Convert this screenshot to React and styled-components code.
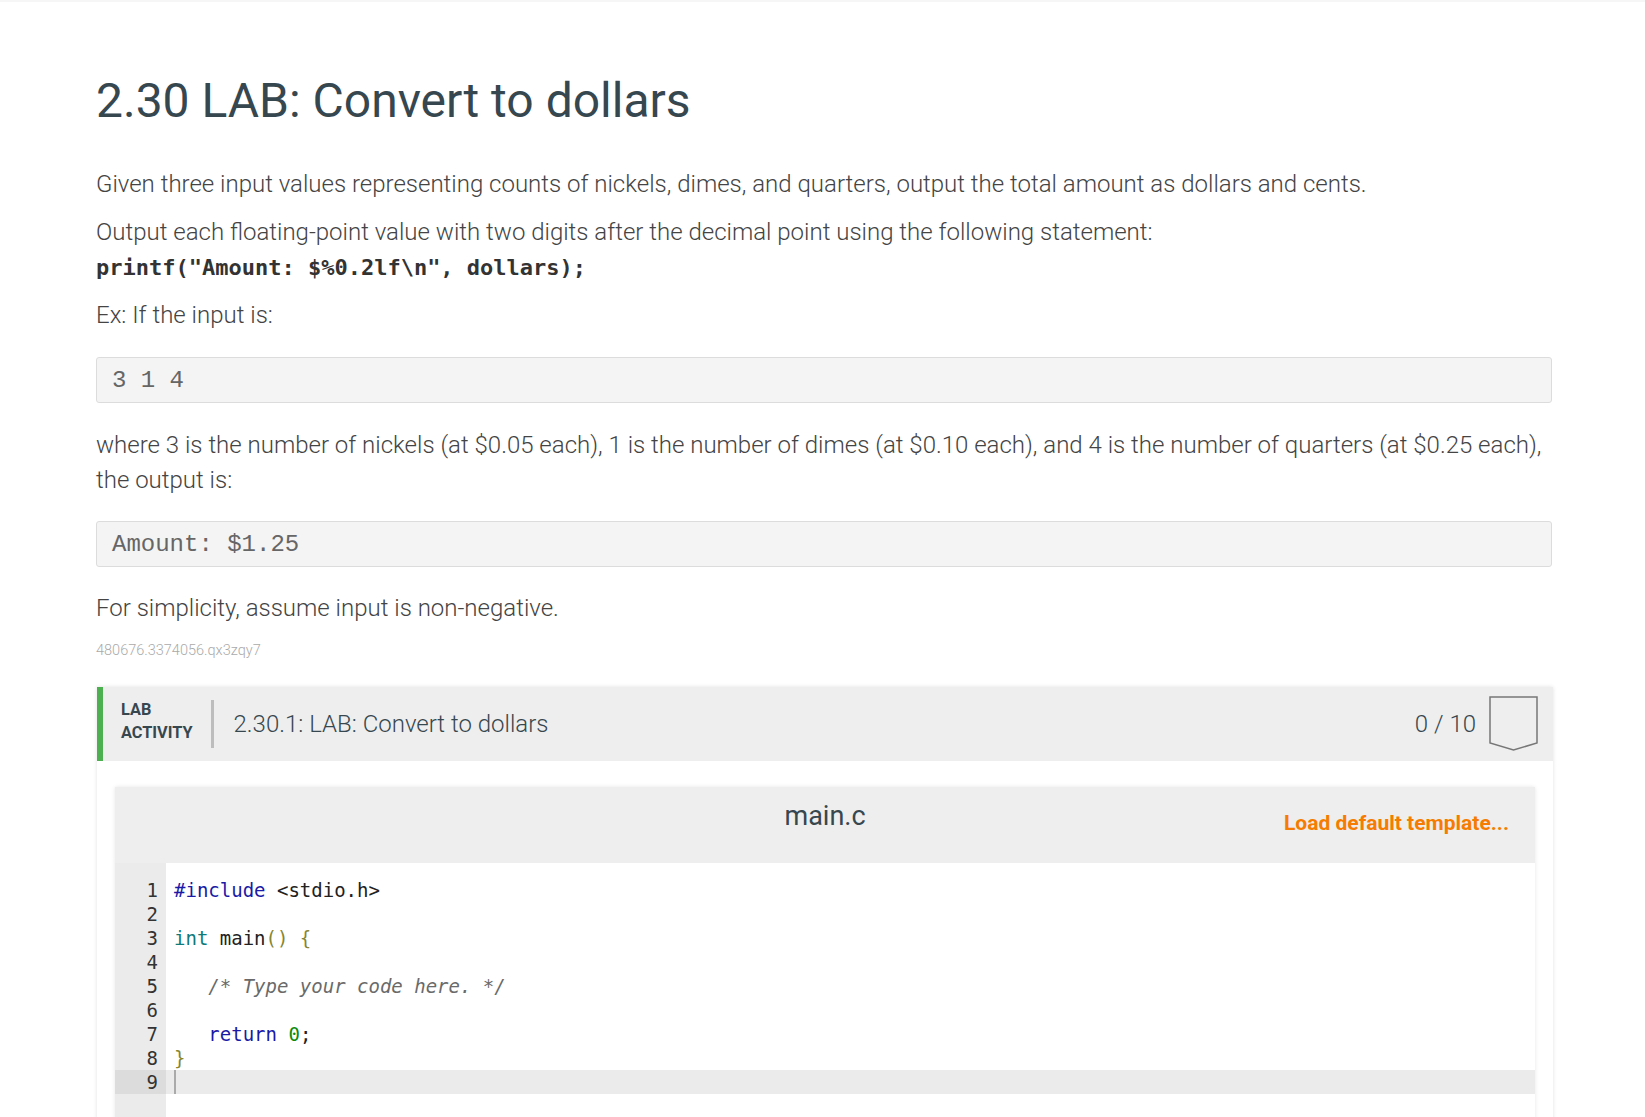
import React from "react";
import styled, { createGlobalStyle } from "styled-components";

const Global = createGlobalStyle`
  html, body { margin: 0; padding: 0; background: #fff; }
  body { font-family: Roboto, "Open Sans", Arial, sans-serif; }
  * { box-sizing: border-box; }
`;

const TopShade = styled.div`
  height: 2px;
  background: #f6f6f6;
`;

const Page = styled.main`
  padding: 71px 0 0 96px;
  width: 1552px;
`;

const Title = styled.h1`
  margin: 0;
  font-size: 48px;
  line-height: 56px;
  font-weight: 400;
  color: #37474f;
`;

const Para = styled.p`
  margin: ${(p) => p.$top || 0}px 0 0;
  font-size: 24px;
  line-height: 35px;
  font-weight: 300;
  color: #444;
`;

const InlineCode = styled.code`
  font-family: "DejaVu Sans Mono", "Liberation Mono", monospace;
  font-weight: 700;
  font-size: 22px;
  color: #333;
`;

const Sample = styled.pre`
  margin: ${(p) => p.$top}px 0 0;
  height: 46px;
  display: flex;
  align-items: center;
  padding: 0 15px;
  background: #f4f4f4;
  border: 1px solid #dcdcdc;
  border-radius: 3px;
  font-family: "Liberation Mono", "DejaVu Sans Mono", monospace;
  font-size: 24px;
  color: #666;
`;

const RefId = styled.div`
  margin-top: 15px;
  font-size: 14.5px;
  line-height: 20px;
  font-weight: 300;
  color: #aaa;
`;

const Lab = styled.section`
  margin: 26px 0 0 1px;
  width: 1456px;
  background: #fff;
  box-shadow: 0 0 4px rgba(0, 0, 0, 0.12);
`;

const LabHeader = styled.header`
  height: 74px;
  display: flex;
  align-items: center;
  background: #eeeeee;
  border-left: 6px solid #4caf50;
  padding: 0 14px 0 18px;
`;

const LabTag = styled.div`
  font-size: 16.3px;
  line-height: 23px;
  font-weight: 700;
  color: #37474f;
  padding-right: 18px;
  margin-top: -6px;
`;

const Divider = styled.div`
  width: 3px;
  height: 48px;
  background: #bdbdbd;
`;

const LabTitle = styled.div`
  flex: 1;
  padding-left: 20px;
  font-size: 24px;
  font-weight: 300;
  color: #37474f;
`;

const Score = styled.div`
  font-size: 24px;
  font-weight: 300;
  color: #37474f;
  margin-right: 13px;
`;

const LabBody = styled.div`
  padding: 26px 18px 0 18px;
`;

const Editor = styled.div`
  background: #fff;
  box-shadow: 0 0 4px rgba(0, 0, 0, 0.1);
`;

const EditorBar = styled.div`
  height: 76px;
  background: #eeeeee;
  position: relative;
  display: flex;
  align-items: center;
  justify-content: center;
`;

const FileName = styled.div`
  font-size: 27px;
  font-weight: 400;
  color: #37474f;
  margin-top: -18px;
`;

const TemplateLink = styled.a`
  position: absolute;
  right: 26px;
  top: 24px;
  font-size: 21px;
  font-weight: 700;
  color: #f57c00;
  text-decoration: none;
`;

const CodeArea = styled.div`
  display: flex;
  padding-bottom: 60px;
  background: linear-gradient(to right, #ebebeb 51px, #fff 51px);
`;

const Lines = styled.div`
  padding-top: 15px;
  width: 100%;
`;

const Line = styled.div`
  display: flex;
  height: 24px;
  line-height: 24px;
  font-family: "DejaVu Sans Mono", "Liberation Mono", monospace;
  font-size: 19px;
  background: ${(p) => (p.$active ? "#ebebeb" : "transparent")};
`;

const Num = styled.span`
  width: 51px;
  flex: none;
  text-align: right;
  padding-right: 8px;
  color: #333;
  background: ${(p) => (p.$active ? "#dcdcdc" : "#ebebeb")};
`;

const Src = styled.span`
  padding-left: 8px;
  white-space: pre;
  color: #222;
`;

const Tok = styled.span`
  color: ${(p) => p.$c};
  font-style: ${(p) => (p.$i ? "italic" : "normal")};
`;

const Cursor = styled.span`
  display: inline-block;
  width: 2px;
  height: 24px;
  vertical-align: top;
  background: #aaa;
`;

const Badge = () => (
  <svg width="50" height="56" viewBox="0 0 50 56">
    <path d="M1 1 H48 V47 L24.5 54 L1 47 Z" fill="#eeeeee" stroke="#777" strokeWidth="1.5" />
  </svg>
);

const KW = "#1a1aa6";
const TY = "#0f7a78";
const BR = "#86862e";
const CM = "#6a6a6a";
const NUM = "#0a8a0a";

const code = [
  [<Tok key="a" $c={KW}>#include</Tok>, " <stdio.h>"],
  [],
  [<Tok key="a" $c={TY}>int</Tok>, " main", <Tok key="b" $c={BR}>() {"{"}</Tok>],
  [],
  ["   ", <Tok key="a" $c={CM} $i>/* Type your code here. */</Tok>],
  [],
  ["   ", <Tok key="a" $c={KW}>return</Tok>, " ", <Tok key="b" $c={NUM}>0</Tok>, ";"],
  [<Tok key="a" $c={BR}>{"}"}</Tok>],
  [<Cursor key="c" />],
];

export default function App() {
  return (
    <>
      <Global />
      <TopShade />
      <Page>
        <Title>2.30 LAB: Convert to dollars</Title>
        <Para $top={38}>
          Given three input values representing counts of nickels, dimes, and quarters, output the total amount as dollars and cents.
        </Para>
        <Para $top={13}>
          Output each floating-point value with two digits after the decimal point using the following statement:
          <br />
          <InlineCode>printf("Amount: $%0.2lf\n", dollars);</InlineCode>
        </Para>
        <Para $top={13}>Ex: If the input is:</Para>
        <Sample $top={24}>3 1 4</Sample>
        <Para $top={25}>
          where 3 is the number of nickels (at $0.05 each), 1 is the number of dimes (at $0.10 each), and 4 is the number of quarters (at $0.25 each), the output is:
        </Para>
        <Sample $top={23}>Amount: $1.25</Sample>
        <Para $top={24}>For simplicity, assume input is non-negative.</Para>
        <RefId>480676.3374056.qx3zqy7</RefId>
        <Lab>
          <LabHeader>
            <LabTag>
              LAB
              <br />
              ACTIVITY
            </LabTag>
            <Divider />
            <LabTitle>2.30.1: LAB: Convert to dollars</LabTitle>
            <Score>0 / 10</Score>
            <Badge />
          </LabHeader>
          <LabBody>
            <Editor>
              <EditorBar>
                <FileName>main.c</FileName>
                <TemplateLink>Load default template...</TemplateLink>
              </EditorBar>
              <CodeArea>
                <Lines>
                  {code.map((parts, i) => (
                    <Line key={i} $active={i === 8}>
                      <Num $active={i === 8}>{i + 1}</Num>
                      <Src>{parts}</Src>
                    </Line>
                  ))}
                </Lines>
              </CodeArea>
            </Editor>
          </LabBody>
        </Lab>
      </Page>
    </>
  );
}
